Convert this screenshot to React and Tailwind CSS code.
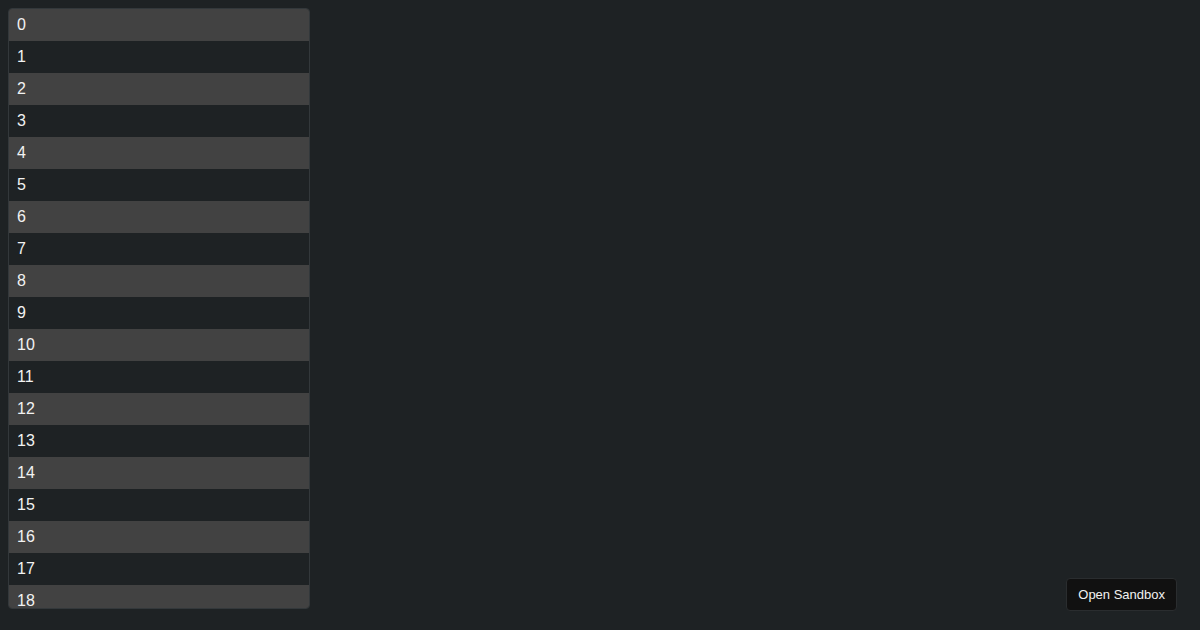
export default function App() {
  const rows = Array.from({ length: 40 }, (_, i) => i)
  return (
    <div className="h-[630px] w-[1200px] bg-[#1e2224] relative overflow-hidden" style={{ fontFamily: '"Liberation Sans", Arial, sans-serif' }}>
      <div className="pt-2 pl-2">
        {/* List */}
        <div className="w-[302px] h-[601px] border border-[#33383b] rounded-[4px] overflow-hidden">
          {rows.map((i) => (
            <div
              key={i}
              className={`h-8 flex items-center pl-2 text-base text-[#f2f2f2] ${i % 2 === 0 ? 'bg-[#424242]' : 'bg-[#1e2224]'}`}
            >
              {i}
            </div>
          ))}
        </div>
      </div>

      <button className="absolute right-[23px] bottom-[19px] h-[33px] px-[11px] bg-[#111111] border border-[#2a2d2f] rounded-[4px] text-[13px] text-[#f2f2f2]">
        Open Sandbox
      </button>
    </div>
  )
}
